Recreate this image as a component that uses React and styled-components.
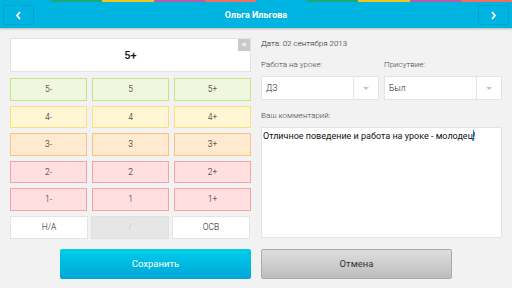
import React from 'react';
import styled, { createGlobalStyle } from 'styled-components';

const GlobalStyle = createGlobalStyle`
  html, body {
    margin: 0;
    padding: 0;
    width: 512px;
    height: 288px;
    overflow: hidden;
    background: #f2f2f2;
    font-family: Roboto, "Noto Sans", "Liberation Sans", sans-serif;
  }
`;

const STRIP = ['#00b4e1', '#1fa87c', '#f3c51f', '#b35ea6', '#ef6f5e'];

const grades = [
  { tone: 'green', items: ['5-', '5', '5+'] },
  { tone: 'yellow', items: ['4-', '4', '4+'] },
  { tone: 'orange', items: ['3-', '3', '3+'] },
  { tone: 'red', items: ['2-', '2', '2+'] },
  { tone: 'red', items: ['1-', '1', '1+'] },
];

const tones = {
  green: { bg: '#eff8dd', border: '#c3e48c' },
  yellow: { bg: '#fff6d3', border: '#fddf7f' },
  orange: { bg: '#ffe9cf', border: '#fdc07f' },
  red: { bg: '#ffdfe0', border: '#f5a3a3' },
};

const Chevron = ({ dir }) => (
  <svg width="7" height="9" viewBox="0 0 7 9">
    <path
      d={dir === 'left' ? 'M5 1 L2 4.5 L5 8' : 'M2 1 L5 4.5 L2 8'}
      fill="none"
      stroke="#fff"
      strokeWidth="1.8"
    />
  </svg>
);

const App = () => {
  return (
    <>
      <GlobalStyle />
      <Page>
        <Header>
          <Strip>
            {[...STRIP, ...STRIP].map((c, i) => (
              <StripPart key={i} color={c} />
            ))}
          </Strip>
          <NavButton>
            <Chevron dir="left" />
          </NavButton>
          <Title>Ольга Ильгова</Title>
          <NavButton>
            <Chevron dir="right" />
          </NavButton>
        </Header>
        <Content>
          <Columns>
            <LeftCol>
              <Display>
                5+
                <ClearButton>×</ClearButton>
              </Display>
              <Grid>
                {grades.map((row) =>
                  row.items.map((g) => (
                    <Grade key={g} tone={row.tone}>
                      {g}
                    </Grade>
                  ))
                )}
              </Grid>
              <ExtraRow>
                <Extra>Н/А</Extra>
                <Extra disabled>/</Extra>
                <Extra>ОСВ</Extra>
              </ExtraRow>
            </LeftCol>
            <RightCol>
              <DateText>Дата: 02 сентября 2013</DateText>
              <Fields>
                <Field>
                  <Label>Работа на уроке:</Label>
                  <Select>
                    <SelectValue>ДЗ</SelectValue>
                    <SelectArrow>
                      <Triangle />
                    </SelectArrow>
                  </Select>
                </Field>
                <Field>
                  <Label>Присутвие:</Label>
                  <Select>
                    <SelectValue>Был</SelectValue>
                    <SelectArrow>
                      <Triangle />
                    </SelectArrow>
                  </Select>
                </Field>
              </Fields>
              <Label spaced>Ваш комментарий:</Label>
              <Comment>
                Отличное поведение и работа на уроке - молодец
                <Caret />!
              </Comment>
            </RightCol>
          </Columns>
          <Actions>
            <SaveButton>Сохранить</SaveButton>
            <CancelButton>Отмена</CancelButton>
          </Actions>
        </Content>
      </Page>
    </>
  );
};

const Page = styled.div`
  width: 512px;
  height: 288px;
  display: flex;
  flex-direction: column;
`;

const Header = styled.div`
  position: relative;
  height: 28px;
  background: #00b4e1;
  display: flex;
  align-items: center;
  justify-content: space-between;
  padding: 0 3px;
  box-sizing: border-box;
  box-shadow: 0 1px 2px rgba(0, 0, 0, 0.25);
`;

const Strip = styled.div`
  position: absolute;
  top: 0;
  left: 0;
  right: 0;
  height: 2px;
  display: flex;
`;

const StripPart = styled.div`
  flex: 1;
  background: ${({ color }) => color};
`;

const NavButton = styled.div`
  width: 31px;
  height: 20px;
  margin-top: 2px;
  box-sizing: border-box;
  border: 1px solid #00a4cf;
  border-radius: 2px;
  display: flex;
  align-items: center;
  justify-content: center;
`;

const Title = styled.div`
  color: #fff;
  font-weight: bold;
  font-size: 9px;
  margin-top: 2px;
`;

const Content = styled.div`
  padding: 10px 10px 0 10px;
  display: flex;
  flex-direction: column;
`;

const Columns = styled.div`
  display: grid;
  grid-template-columns: 241px 241px;
  gap: 10px;
`;

const LeftCol = styled.div`
  display: flex;
  flex-direction: column;
`;

const Display = styled.div`
  position: relative;
  height: 34px;
  box-sizing: border-box;
  background: #fff;
  border: 1px solid #e2e2e2;
  display: flex;
  align-items: center;
  justify-content: center;
  font-size: 11px;
  font-weight: 500;
  color: #111;
`;

const ClearButton = styled.div`
  position: absolute;
  top: 0;
  right: 0;
  width: 12px;
  height: 12px;
  background: #c9c9c9;
  color: #fff;
  font-size: 8px;
  line-height: 12px;
  text-align: center;
  font-weight: bold;
`;

const Grid = styled.div`
  margin-top: 6px;
  display: grid;
  grid-template-columns: repeat(3, 77px);
  grid-auto-rows: 22.5px;
  column-gap: 5px;
  row-gap: 5px;
`;

const Grade = styled.div`
  box-sizing: border-box;
  background: ${({ tone }) => tones[tone].bg};
  border: 1px solid ${({ tone }) => tones[tone].border};
  display: flex;
  align-items: center;
  justify-content: center;
  font-size: 8.5px;
  font-weight: 300;
  color: #222;
`;

const ExtraRow = styled.div`
  margin-top: 5.5px;
  display: grid;
  grid-template-columns: repeat(3, 78px);
  column-gap: 3px;
  height: 22.5px;
`;

const Extra = styled.div`
  box-sizing: border-box;
  background: ${({ disabled }) => (disabled ? '#e6e6e6' : '#fff')};
  border: 1px solid ${({ disabled }) => (disabled ? '#e0e0e0' : '#e4e4e4')};
  color: ${({ disabled }) => (disabled ? '#bdbdbd' : '#222')};
  display: flex;
  align-items: center;
  justify-content: center;
  font-size: 8.5px;
  font-weight: 300;
`;

const RightCol = styled.div`
  display: flex;
  flex-direction: column;
`;

const DateText = styled.div`
  font-size: 8px;
  font-weight: 300;
  color: #222;
  height: 12px;
  line-height: 12px;
`;

const Fields = styled.div`
  margin-top: 9px;
  display: grid;
  grid-template-columns: 118px 118px;
  column-gap: 5px;
`;

const Field = styled.div`
  display: flex;
  flex-direction: column;
`;

const Label = styled.div`
  font-size: 8px;
  font-weight: 300;
  color: #444;
  height: 12px;
  line-height: 12px;
  margin-top: ${({ spaced }) => (spaced ? '10px' : '0')};
  margin-bottom: 5px;
`;

const Select = styled.div`
  height: 24px;
  box-sizing: border-box;
  background: #fff;
  border: 1px solid #e4e4e4;
  display: flex;
`;

const SelectValue = styled.div`
  flex: 1;
  display: flex;
  align-items: center;
  padding-left: 4px;
  font-size: 8.5px;
  font-weight: 300;
  color: #222;
`;

const SelectArrow = styled.div`
  width: 24px;
  border-left: 1px solid #e4e4e4;
  display: flex;
  align-items: center;
  justify-content: center;
`;

const Triangle = styled.div`
  width: 0;
  height: 0;
  border-left: 3px solid transparent;
  border-right: 3px solid transparent;
  border-top: 3px solid #c4c4c4;
`;

const Comment = styled.div`
  height: 111px;
  box-sizing: border-box;
  background: #fff;
  border: 1px solid #e4e4e4;
  padding: 2px 1px;
  font-size: 9px;
  color: #111;
  line-height: 12px;
`;

const Caret = styled.span`
  display: inline-block;
  width: 1px;
  height: 11px;
  background: #1a8fe0;
  vertical-align: -2px;
  margin-right: -1px;
`;

const Actions = styled.div`
  margin-top: 10px;
  display: flex;
  justify-content: center;
  gap: 10px;
`;

const SaveButton = styled.div`
  width: 191px;
  height: 30px;
  box-sizing: border-box;
  background: linear-gradient(#00cdea, #00a6d8);
  border-radius: 2px;
  color: #fff;
  font-size: 9.5px;
  display: flex;
  align-items: center;
  justify-content: center;
`;

const CancelButton = styled.div`
  width: 191px;
  height: 30px;
  box-sizing: border-box;
  background: linear-gradient(#dedede, #bdbdbd);
  border: 1px solid #a9a9a9;
  border-radius: 2px;
  color: #333;
  font-size: 9.5px;
  display: flex;
  align-items: center;
  justify-content: center;
`;

export default App;
